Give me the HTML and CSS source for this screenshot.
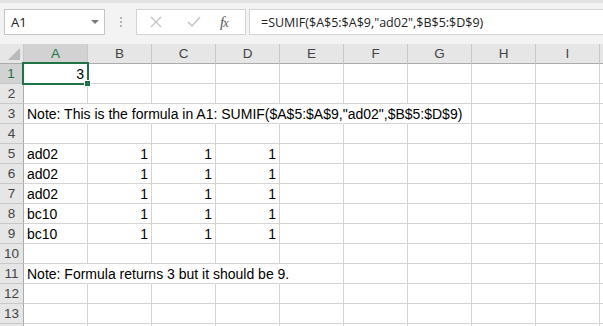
FILE: index.html
```html
<!DOCTYPE html>
<html>
<head>
<meta charset="utf-8">
<link rel="stylesheet" href="styles.css">
</head>
<body>
<div class="app">
  <div class="topstrip"></div>
  <div class="fbar">
    <div class="namebox"><span class="nb-text">A1</span><svg class="nb-arrow" width="8" height="5" viewBox="0 0 8 5"><path d="M0 0 L8 0 L4 4 Z" fill="#7a7a7a"/></svg></div>
    <div class="dots"><i></i><i></i><i></i></div>
    <div class="btnbox">
      <svg class="ico" width="12" height="12" viewBox="0 0 12 12"><path d="M1 1 L11 11 M11 1 L1 11" stroke="#c3c3c3" stroke-width="1.3" fill="none"/></svg>
      <svg class="ico" width="14" height="12" viewBox="0 0 14 12"><path d="M1 6 L5 10 L13 1" stroke="#c3c3c3" stroke-width="1.5" fill="none"/></svg>
      <span class="fx">f<span class="fxx">x</span></span>
    </div>
    <div class="formula">=SUMIF($A$5:$A$9,"ad02",$B$5:$D$9)</div>
  </div>
  <div class="sheet">
    <div class="grid">
      <div class="corner"><svg width="12" height="12" viewBox="0 0 12 12"><path d="M12 0 L12 12 L0 12 Z" fill="#b9b9b9"/></svg></div>
      <div class="ch sel">A</div><div class="ch">B</div><div class="ch">C</div><div class="ch">D</div><div class="ch">E</div><div class="ch">F</div><div class="ch">G</div><div class="ch">H</div><div class="ch">I</div><div class="ch last"></div>

      <div class="rh sel">1</div><div class="c r">3</div><div class="c"></div><div class="c"></div><div class="c"></div><div class="c"></div><div class="c"></div><div class="c"></div><div class="c"></div><div class="c"></div><div class="c"></div>
      <div class="rh">2</div><div class="c"></div><div class="c"></div><div class="c"></div><div class="c"></div><div class="c"></div><div class="c"></div><div class="c"></div><div class="c"></div><div class="c"></div><div class="c"></div>
      <div class="rh">3</div><div class="c ov">Note: This is the formula in A1: SUMIF($A$5:$A$9,"ad02",$B$5:$D$9)</div><div class="c nb"></div><div class="c nb"></div><div class="c nb"></div><div class="c nb"></div><div class="c nb"></div><div class="c"></div><div class="c"></div><div class="c"></div><div class="c"></div>
      <div class="rh">4</div><div class="c"></div><div class="c"></div><div class="c"></div><div class="c"></div><div class="c"></div><div class="c"></div><div class="c"></div><div class="c"></div><div class="c"></div><div class="c"></div>
      <div class="rh">5</div><div class="c">ad02</div><div class="c r">1</div><div class="c r">1</div><div class="c r">1</div><div class="c"></div><div class="c"></div><div class="c"></div><div class="c"></div><div class="c"></div><div class="c"></div>
      <div class="rh">6</div><div class="c">ad02</div><div class="c r">1</div><div class="c r">1</div><div class="c r">1</div><div class="c"></div><div class="c"></div><div class="c"></div><div class="c"></div><div class="c"></div><div class="c"></div>
      <div class="rh">7</div><div class="c">ad02</div><div class="c r">1</div><div class="c r">1</div><div class="c r">1</div><div class="c"></div><div class="c"></div><div class="c"></div><div class="c"></div><div class="c"></div><div class="c"></div>
      <div class="rh">8</div><div class="c">bc10</div><div class="c r">1</div><div class="c r">1</div><div class="c r">1</div><div class="c"></div><div class="c"></div><div class="c"></div><div class="c"></div><div class="c"></div><div class="c"></div>
      <div class="rh">9</div><div class="c">bc10</div><div class="c r">1</div><div class="c r">1</div><div class="c r">1</div><div class="c"></div><div class="c"></div><div class="c"></div><div class="c"></div><div class="c"></div><div class="c"></div>
      <div class="rh">10</div><div class="c"></div><div class="c"></div><div class="c"></div><div class="c"></div><div class="c"></div><div class="c"></div><div class="c"></div><div class="c"></div><div class="c"></div><div class="c"></div>
      <div class="rh">11</div><div class="c ov">Note: Formula returns 3 but it should be 9.</div><div class="c nb"></div><div class="c nb"></div><div class="c nb"></div><div class="c"></div><div class="c"></div><div class="c"></div><div class="c"></div><div class="c"></div><div class="c"></div>
      <div class="rh">12</div><div class="c"></div><div class="c"></div><div class="c"></div><div class="c"></div><div class="c"></div><div class="c"></div><div class="c"></div><div class="c"></div><div class="c"></div><div class="c"></div>
      <div class="rh">13</div><div class="c"></div><div class="c"></div><div class="c"></div><div class="c"></div><div class="c"></div><div class="c"></div><div class="c"></div><div class="c"></div><div class="c"></div><div class="c"></div>
      <div class="rh"></div><div class="c"></div><div class="c"></div><div class="c"></div><div class="c"></div><div class="c"></div><div class="c"></div><div class="c"></div><div class="c"></div><div class="c"></div><div class="c"></div>
    </div>
    <div class="selbox"><div class="handle"></div></div>
  </div>
</div>
</body>
</html>
```
FILE: styles.css
```css
* { box-sizing: border-box; }
html, body { margin: 0; padding: 0; }
body { width: 603px; height: 326px; overflow: hidden; background: #fff; }
.app { width: 603px; height: 326px; overflow: hidden; }
.topstrip { height: 3px; background: #e3e3e3; }
.fbar {
  height: 41px; background: #f3f3f3;
  display: flex; align-items: flex-start; padding-top: 6px; padding-left: 4px;
}
.namebox {
  width: 101px; height: 26px; background: #fff; border: 1px solid #c6c6c6;
  display: flex; align-items: center; justify-content: space-between; padding: 0 5px 0 6px;
  font-family: "Open Sans", sans-serif; font-size: 13px; color: #222;
}
.nb-arrow { margin-top: 1px; }
.dots { width: 31px; height: 26px; display: flex; flex-direction: column; align-items: center; justify-content: center; gap: 2px; }
.dots i { display: block; width: 2px; height: 2px; background: #b5b5b5; }
.btnbox {
  width: 110px; height: 26px; background: #fff; border: 1px solid #d4d4d4;
  display: flex; align-items: center; padding-left: 13px; gap: 0;
}
.btnbox .ico:nth-child(1) { margin-right: 25px; }
.btnbox .ico:nth-child(2) { margin-right: 19px; }
.fx { font-family: "Liberation Serif", serif; font-style: italic; font-size: 15px; color: #555; letter-spacing: -1px; }
.fxx { font-size: 12px; }
.formula {
  margin-left: 3px; flex: 1; height: 26px; background: #fff; border: 1px solid #d4d4d4; border-right: none;
  font-family: "Open Sans", sans-serif; font-size: 12.5px; color: #222;
  display: flex; align-items: center; padding-left: 11px; white-space: nowrap;
}
.sheet { position: relative; }
.grid {
  display: grid;
  grid-template-columns: 24px repeat(9, 64px) 40px;
  grid-auto-rows: 20px;
  font-family: "Liberation Sans", Arial, sans-serif;
}
.corner { background: #e6e6e6; border-right: 1px solid #c8c8c8; border-bottom: 1px solid #ababab; display: flex; align-items: flex-end; justify-content: flex-end; padding: 0 3px 3px 0; }
.ch {
  background: #e6e6e6; border-right: 1px solid #c8c8c8; border-bottom: 1px solid #ababab;
  display: flex; align-items: center; justify-content: center; font-size: 13.5px; color: #444;
}
.ch.sel, .rh.sel { background: #d2d2d2; color: #217346; }
.ch.sel { border-bottom: 2px solid #217346; }
.rh {
  background: #e6e6e6; border-right: 1px solid #ababab; border-bottom: 1px solid #c8c8c8;
  display: flex; align-items: center; justify-content: center; font-size: 13.5px; color: #444;
}
.rh.sel { border-right: 2px solid #217346; }
.c {
  border-right: 1px solid #d4d4d4; border-bottom: 1px solid #d4d4d4;
  font-size: 14px; color: #000; padding: 0 3px 0 3px;
  display: flex; align-items: center; white-space: nowrap; overflow: visible;
}
.c.r { justify-content: flex-end; }
.c.ov { position: relative; z-index: 1; border-right-color: transparent; }
.c.nb { border-right-color: transparent; }
.selbox {
  position: absolute; left: 22px; top: 18px; width: 67px; height: 23px;
  border: 2px solid #217346; z-index: 2;
}
.handle { position: absolute; right: -4px; bottom: -4px; width: 7px; height: 7px; background: #217346; border: 1px solid #fff; }
```
